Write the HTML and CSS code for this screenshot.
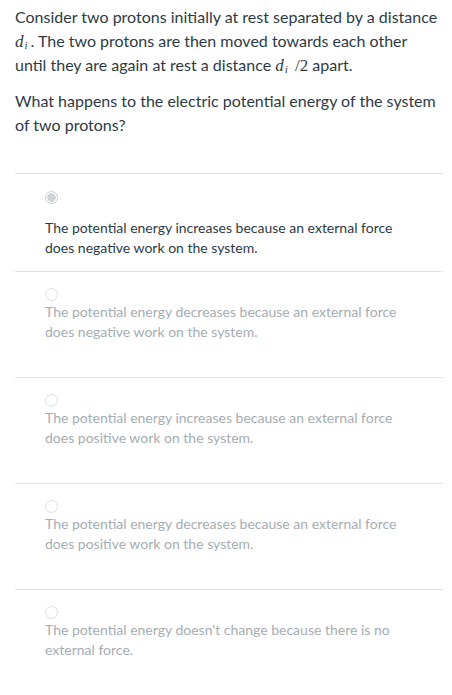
FILE: index.html
```html
<!DOCTYPE html>
<html>
<head>
<meta charset="utf-8">
<link rel="stylesheet" href="styles.css">
</head>
<body>
<div class="question">
  <p class="q-text">Consider two protons initially at rest separated by a distance <span class="math"><i>d</i><sub>i</sub></span>. The two protons are then moved towards each other until they are again at rest a distance <span class="math"><i>d</i><sub>i</sub> /2</span> apart.</p>
  <p class="q-text">What happens to the electric potential energy of the system of two protons?</p>
  <div class="answers">
    <div class="answer selected">
      <span class="radio checked"></span>
      <div class="answer-text">The potential energy increases because an external force does negative work on the system.</div>
    </div>
    <div class="answer">
      <span class="radio"></span>
      <div class="answer-text">The potential energy decreases because an external force does negative work on the system.</div>
    </div>
    <div class="answer">
      <span class="radio"></span>
      <div class="answer-text">The potential energy increases because an external force does positive work on the system.</div>
    </div>
    <div class="answer">
      <span class="radio"></span>
      <div class="answer-text">The potential energy decreases because an external force does positive work on the system.</div>
    </div>
    <div class="answer">
      <span class="radio"></span>
      <div class="answer-text">The potential energy doesn't change because there is no external force.</div>
    </div>
  </div>
</div>
</body>
</html>
```

FILE: styles.css
```css
html, body {
  margin: 0;
  padding: 0;
  background: #ffffff;
}
body {
  font-family: Lato, "Open Sans", sans-serif;
  color: #2d3b45;
}
.question {
  padding: 5px 9px 0 15px;
}
.q-text {
  margin: 0 3px 12px 0;
  font-size: 16px;
  line-height: 24px;
}
.math {
  font-family: "Liberation Serif", "DejaVu Serif", serif;
  font-size: 17px;
  line-height: 0;
}
.math i {
  font-style: italic;
}
.math sub {
  font-style: italic;
  font-size: 11px;
  vertical-align: -2px;
  line-height: 0;
  margin-left: 1px;
  margin-right: 3px;
}
.answers {
  margin-top: 36px;
  border-top: 1px solid #e2e4e6;
}
.answer {
  display: flex;
  flex-direction: column;
  align-items: flex-start;
  padding: 16px 0 35px 30px;
  border-bottom: 1px solid #e2e4e6;
}
.answer .radio {
  margin-bottom: 1px;
}
.answer.selected {
  padding-top: 17px;
  padding-bottom: 13px;
}
.answer.selected .radio {
  margin-bottom: 14px;
}
.radio {
  box-sizing: border-box;
  width: 13px;
  height: 13px;
  border-radius: 50%;
  border: 1px solid #dcdfe2;
  background: #fff;
  flex: none;
}
.radio.checked {
  border: 1px solid #c9cccf;
  background: radial-gradient(circle, #cfd1d3 0 4px, #ffffff 4.5px);
}
.answer-text {
  font-size: 14px;
  line-height: 20px;
  color: #a5adb3;
  width: 370px;
}
.answer.selected .answer-text {
  color: #2d3b45;
}
```
